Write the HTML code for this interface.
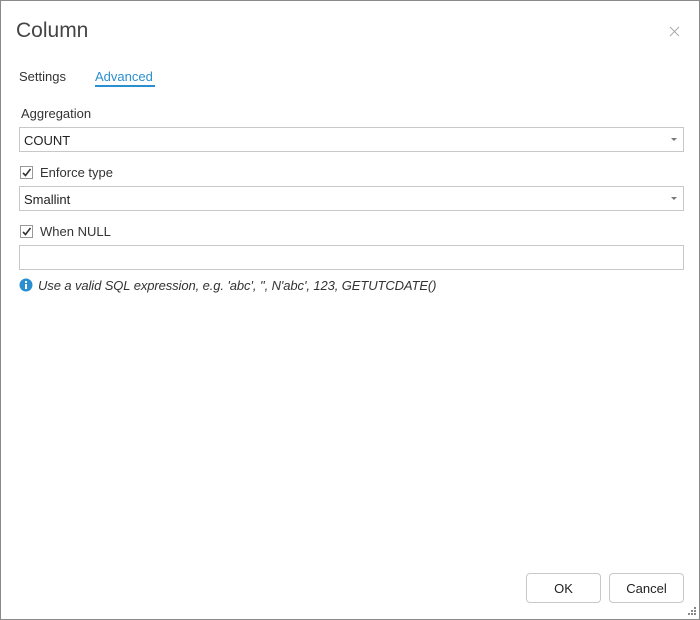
<!DOCTYPE html>
<html><head><style>
*{box-sizing:border-box;margin:0;padding:0}
body{width:700px;height:620px;background:#fff;font-family:"Liberation Sans",sans-serif;color:#333;position:relative;overflow:hidden}
.frame{position:absolute;left:0;top:0;width:700px;height:620px;border:1px solid #8a8a8a}
.a{position:absolute;white-space:nowrap}
.inp{position:absolute;left:19px;width:665px;height:25px;border:1px solid #c8c8c8;font-size:13px;padding:5px 0 0 4px;color:#222}
.arr{position:absolute;right:6px;top:10px;width:0;height:0;border-left:3px solid transparent;border-right:3px solid transparent;border-top:3px solid #777}
.cb{position:absolute;left:20px;width:13px;height:13px;border:1px solid #999}
.btn{position:absolute;top:573px;height:30px;border:1px solid #c8c8c8;border-radius:4px;font-size:13px;text-align:center;line-height:29px;color:#222}
</style></head><body>
<div class="frame"></div>
<div class="a" style="left:16px;top:19px;font-size:21px;color:#444">Column</div>
<svg class="a" style="left:669px;top:26px" width="11" height="11"><path d="M1 1L10 10M10 1L1 10" stroke="#aaa" stroke-width="1"/></svg>
<div class="a" style="left:19px;top:69px;font-size:13px;color:#333">Settings</div>
<div class="a" style="left:95px;top:69px;font-size:13px;color:#2a8fd0">Advanced</div>
<div class="a" style="left:95px;top:85px;width:60px;height:2px;background:#2a8fd0"></div>
<div class="a" style="left:21px;top:106px;font-size:13px">Aggregation</div>
<div class="inp" style="top:127px">COUNT<div class="arr"></div></div>
<div class="cb" style="top:166px"></div>
<svg class="a" style="left:21px;top:167px" width="11" height="11"><path d="M2 6L4.5 8.5L9.5 2" stroke="#333" stroke-width="1.6" fill="none"/></svg>
<div class="a" style="left:40px;top:165px;font-size:13px">Enforce type</div>
<div class="inp" style="top:186px">Smallint<div class="arr"></div></div>
<div class="cb" style="top:225px"></div>
<svg class="a" style="left:21px;top:226px" width="11" height="11"><path d="M2 6L4.5 8.5L9.5 2" stroke="#333" stroke-width="1.6" fill="none"/></svg>
<div class="a" style="left:40px;top:224px;font-size:13px">When NULL</div>
<div class="inp" style="top:245px"></div>
<svg class="a" style="left:19px;top:278px" width="14" height="14"><circle cx="7" cy="7" r="6.5" fill="#2a8fd0"/><rect x="6" y="6" width="2" height="5" fill="#fff"/><rect x="6" y="3" width="2" height="2" fill="#fff"/></svg>
<div class="a" style="left:38px;top:278px;font-size:13px;font-style:italic;color:#333;letter-spacing:-0.1px">Use a valid SQL expression, e.g. 'abc', '', N'abc', 123, GETUTCDATE()</div>
<div class="btn" style="left:526px;width:75px">OK</div>
<div class="btn" style="left:609px;width:75px">Cancel</div>
<svg class="a" style="left:688px;top:607px" width="9" height="9" fill="#888"><rect x="6" y="0" width="2" height="2"/><rect x="3" y="3" width="2" height="2"/><rect x="6" y="3" width="2" height="2"/><rect x="0" y="6" width="2" height="2"/><rect x="3" y="6" width="2" height="2"/><rect x="6" y="6" width="2" height="2"/></svg>
</body></html>
